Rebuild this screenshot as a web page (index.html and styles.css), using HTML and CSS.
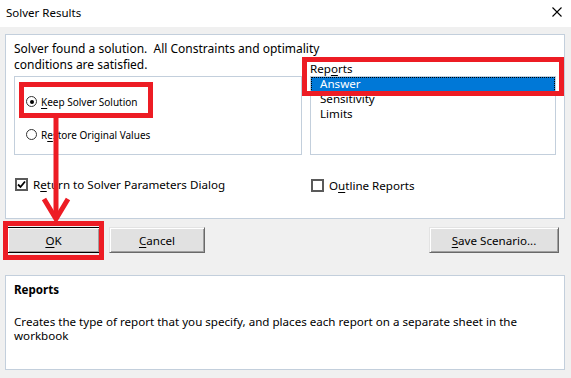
FILE: index.html
```html
<!DOCTYPE html>
<html lang="en">
<head>
  <meta charset="UTF-8" />
  <title>Solver Results</title>
  <link rel="stylesheet" href="styles.css">
</head>
<body>

  <!-- Title bar -->
  <div class="titlebar">
    <span class="title">Solver Results</span>
    <svg class="close" width="10" height="10" viewBox="0 0 10 10">
      <path d="M0.5 0.5 L9.5 9.5 M9.5 0.5 L0.5 9.5" stroke="#000" stroke-width="1.1" fill="none"/>
    </svg>
  </div>

  <div class="dialog">
    <!-- Main panel -->
    <div class="panel main">
      <p class="message">Solver found a solution.&nbsp; All Constraints and optimality<br>conditions are satisfied.</p>

      <div class="options">
        <div class="groupbox">
          <label class="radio-row first">
            <span class="radio checked"></span>
            <span><u>K</u>eep Solver Solution</span>
          </label>
          <label class="radio-row">
            <span class="radio"></span>
            <span>R<u>e</u>store Original Values</span>
          </label>
        </div>

        <div class="reports">
          <div class="reports-label">Rep<u>o</u>rts</div>
          <ul class="listbox">
            <li class="selected">Answer</li>
            <li>Sensitivity</li>
            <li>Limits</li>
          </ul>
        </div>
      </div>

      <div class="checks">
        <label class="check-row return">
          <span class="checkbox checked">
            <svg width="9" height="9" viewBox="0 0 9 9"><path d="M1 4.5 L3.5 7 L8 1.5" stroke="#000" stroke-width="1.8" fill="none"/></svg>
          </span>
          <span>R<u>e</u>turn to Solver Parameters Dialog</span>
        </label>
        <label class="check-row outline">
          <span class="checkbox"></span>
          <span>O<u>u</u>tline Reports</span>
        </label>
      </div>
    </div>

    <!-- Buttons -->
    <div class="buttons">
      <button class="btn ok default"><u>O</u>K</button>
      <button class="btn cancel"><u>C</u>ancel</button>
      <button class="btn save"><u>S</u>ave Scenario...</button>
    </div>

    <!-- Help panel -->
    <div class="panel help">
      <div class="help-title">Reports</div>
      <p class="help-text">Creates the type of report that you specify, and places each report on a separate sheet in the<br>workbook</p>
    </div>
  </div>

  <!-- Red annotations drawn over the dialog -->
  <div class="mark mark-keep"></div>
  <div class="mark mark-reports"></div>
  <div class="mark mark-ok"></div>
  <svg class="arrow" width="40" height="110" viewBox="0 0 40 110">
    <path d="M16 0 L16 102" stroke="#ed1c24" stroke-width="5" fill="none"/>
    <path d="M4 82 L16 102 L28 82" stroke="#ed1c24" stroke-width="5" fill="none" stroke-linejoin="miter"/>
  </svg>

</body>
</html>
```

FILE: styles.css
```css
/* Windows dialog look */
body {
  margin: 0;
  width: 571px;
  height: 378px;
  background: #f0f0f0;
  font-family: 'Noto Sans', sans-serif;
  font-size: 11.6px;
  color: #000;
  position: relative;
  overflow: hidden;
}
u {
  text-decoration-thickness: 1px;
  text-underline-offset: 2px;
}
.titlebar {
  height: 27px;
  background: #fff;
  display: flex;
  align-items: center;
  justify-content: space-between;
  padding: 0 9px 0 6px;
}
.title {
  font-size: 11.5px;
  margin-top: -2px;
}
.close {
  margin-top: -3px;
}
.dialog {
  padding: 7px 6px 0 5px;
}
.panel {
  background: #fff;
  border: 1px solid #c3cfdc;
  box-sizing: border-box;
}
.main {
  height: 185px;
  padding: 0 8px;
}
.message {
  margin: 6px 0 0 0;
  font-size: 12px;
  line-height: 16px;
}
.options {
  display: flex;
  justify-content: space-between;
  margin-top: 3px;
}
.groupbox {
  width: 288px;
  height: 79px;
  border: 1px solid #c3cfdc;
  box-sizing: border-box;
  padding: 18px 0 0 11px;
  font-size: 10px;
}
.radio-row {
  display: flex;
  align-items: center;
  gap: 4px;
  height: 13px;
}
.radio-row + .radio-row {
  margin-top: 20px;
}
.radio {
  width: 11px;
  height: 11px;
  border: 1px solid #333;
  border-radius: 50%;
  box-sizing: border-box;
  position: relative;
}
.radio.checked::after {
  content: '';
  position: absolute;
  left: 2.5px;
  top: 2.5px;
  width: 4px;
  height: 4px;
  border-radius: 50%;
  background: #000;
}
.reports {
  width: 246px;
  margin-top: -15px;
}
.reports-label {
  height: 15px;
  line-height: 15px;
}
.listbox {
  list-style: none;
  margin: 0;
  padding: 0;
  height: 79px;
  border: 1px solid #c3cfdc;
  box-sizing: border-box;
}
.listbox li {
  height: 15px;
  line-height: 14px;
  padding-left: 9px;
}
.listbox li.selected {
  background: #0078d7;
  color: #fff;
  outline: 1px dotted #000;
  outline-offset: -1px;
}
.checks {
  display: flex;
  margin-top: 20px;
}
.check-row {
  display: flex;
  align-items: center;
  gap: 5px;
  line-height: 15px;
}
.check-row.return {
  flex: 0 0 297px;
  padding-left: 1px;
  box-sizing: border-box;
}
.check-row.outline {
  margin-top: 3px;
}
.checkbox {
  width: 13px;
  height: 13px;
  border: 2px solid #5a5a5a;
  box-sizing: border-box;
  display: flex;
  align-items: center;
  justify-content: center;
  background: #fff;
}
.buttons {
  display: flex;
  margin-top: 8px;
  height: 26px;
}
.btn {
  font-family: inherit;
  font-size: 11.6px;
  background: #e1e1e1;
  border: 1px solid;
  border-color: #e3e3e3 #696969 #696969 #e3e3e3;
  box-shadow: inset 1px 1px 0 #fff, inset -1px -1px 0 #a0a0a0;
  padding: 0;
  color: #000;
}
.btn.default {
  border-color: #000;
}
.ok {
  width: 93px;
  margin-left: 2px;
}
.cancel {
  width: 96px;
  margin-left: 9px;
}
.save {
  width: 130px;
  margin-left: auto;
  margin-right: 6px;
}
.help {
  margin-top: 22px;
  height: 95px;
  padding: 6px 8px;
}
.help-title {
  font-weight: bold;
}
.help-text {
  margin: 18px 0 0 0;
  line-height: 14px;
}

/* Red annotation marks */
.mark {
  position: absolute;
  border: 5px solid #ed1c24;
  box-sizing: border-box;
}
.mark-keep {
  left: 19px;
  top: 82px;
  width: 134px;
  height: 36px;
}
.mark-reports {
  left: 302px;
  top: 57px;
  width: 262px;
  height: 39px;
}
.mark-ok {
  left: 3px;
  top: 221px;
  width: 101px;
  height: 39px;
}
.arrow {
  position: absolute;
  left: 40px;
  top: 117px;
}
```
